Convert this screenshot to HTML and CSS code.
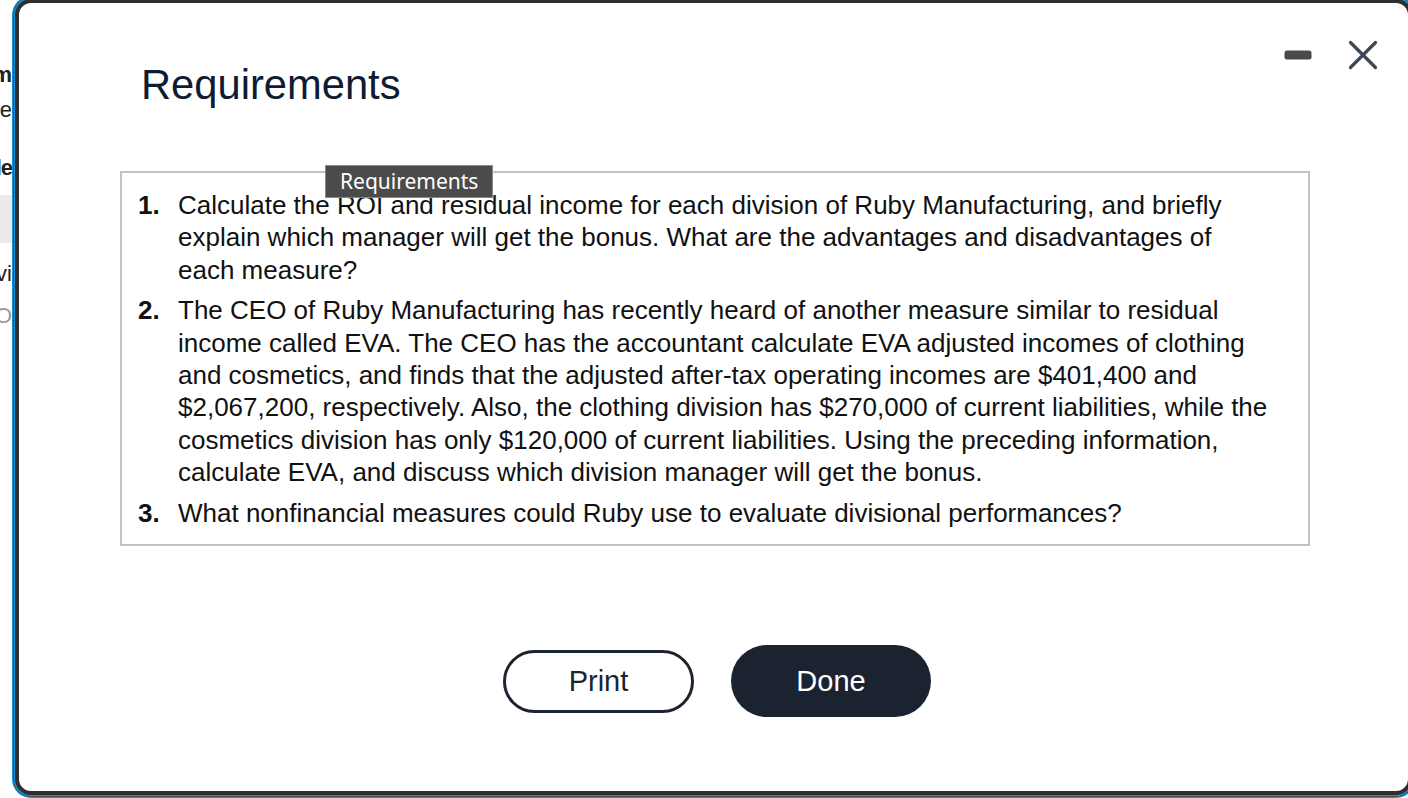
FILE: index.html
```html
<!DOCTYPE html>
<html lang="en">
<head>
<meta charset="utf-8">
<title>Requirements</title>
<link rel="stylesheet" href="styles.css">
</head>
<body>
<div class="page">
  <div class="bg-col">
    <div class="bg-line bold l1">nm</div>
    <div class="bg-line l2">ge</div>
    <div class="bg-line bold l3">ble</div>
    <div class="bg-band"></div>
    <div class="bg-line l4">ovi</div>
    <div class="bg-line light l5">O</div>
  </div>

  <div class="modal" role="dialog" aria-label="Requirements">
    <div class="modal-head">
      <h1 class="title">Requirements</h1>
      <div class="win-ctrls">
        <svg class="ico-min" width="28" height="10" viewBox="0 0 28 10" aria-hidden="true"><rect x="0.5" y="0.5" width="27" height="9" rx="2.5" fill="#4a4a4a"/></svg>
        <svg class="ico-close" width="30" height="30" viewBox="0 0 30 30" aria-hidden="true"><path d="M2.5 2.5 L27.5 27.5 M27.5 2.5 L2.5 27.5" stroke="#3c4753" stroke-width="3.2" stroke-linecap="round"/></svg>
      </div>
    </div>

    <div class="req-box">
      <ol class="req-list">
        <li><span class="num">1.</span><span class="txt">Calculate the ROI and residual income for each division of Ruby Manufacturing, and briefly explain which manager will get the bonus. What are the advantages and disadvantages of each measure?</span></li>
        <li><span class="num">2.</span><span class="txt">The CEO of Ruby Manufacturing has recently heard of another measure similar to residual income called EVA. The CEO has the accountant calculate EVA adjusted incomes of clothing and cosmetics, and finds that the adjusted after-tax operating incomes are $401,400 and $2,067,200, respectively. Also, the clothing division has $270,000 of current liabilities, while the cosmetics division has only $120,000 of current liabilities. Using the preceding information, calculate EVA, and discuss which division manager will get the bonus.</span></li>
        <li><span class="num">3.</span><span class="txt">What nonfinancial measures could Ruby use to evaluate divisional performances?</span></li>
      </ol>
      <div class="tooltip">Requirements</div>
    </div>

    <div class="actions">
      <button class="btn btn-print" type="button">Print</button>
      <button class="btn btn-done" type="button">Done</button>
    </div>
  </div>
</div>
</body>
</html>
```

FILE: styles.css
```css
html, body {
  margin: 0;
  padding: 0;
  background: #ffffff;
}

body {
  font-family: "Liberation Sans", Arial, Helvetica, sans-serif;
  color: #111111;
}

.page {
  position: relative;
  width: 1408px;
  height: 798px;
  overflow: hidden;
}

/* background page peeking on the left */
.bg-col {
  width: 12px;
  overflow: hidden;
  display: flex;
  flex-direction: column;
  align-items: flex-end;
  font-size: 22px;
  line-height: 26px;
  color: #222;
}

.bg-line {
  white-space: nowrap;
}

.bg-line.bold { font-weight: 700; }
.bg-line.light { color: #999; }

.l1 { margin-top: 62px; }
.l2 { margin-top: 9px; }
.l3 { margin-top: 32px; letter-spacing: -1px; }
.bg-band {
  width: 12px;
  height: 48px;
  margin-top: 14px;
  background: #ebebeb;
  align-self: stretch;
}
.l4 { margin-top: 18px; }
.l5 { margin-top: 16px; }

/* modal */
.modal {
  position: absolute;
  left: 15px;
  top: -1px;
  width: 1397px;
  height: 796px;
  box-sizing: border-box;
  background: #ffffff;
  border: 4px solid #2e2e2e;
  border-radius: 16px;
  box-shadow: 0 0 0 3px #1b8fd2;
  outline: 1px dotted #2e2e2e;
  outline-offset: 1px;
  display: flex;
  flex-direction: column;
}

.modal-head {
  display: flex;
  justify-content: space-between;
  align-items: flex-start;
  padding: 0 30px 0 122px;
}

.title {
  margin: 60px 0 0 0;
  font-family: "Liberation Sans", Arial, Helvetica, sans-serif;
  font-weight: 400;
  font-size: 41.7px;
  line-height: 44px;
  color: #0f1b33;
}

.win-ctrls {
  display: flex;
  align-items: center;
  gap: 36px;
  margin-top: 37px;
}

.ico-min, .ico-close { display: block; }

.req-box {
  position: relative;
  margin: 64px 0 0 101px;
  width: 1190px;
  box-sizing: border-box;
  border: 2px solid #c2c2c2;
  padding: 16px 38px 15px 16px;
}

.req-list {
  list-style: none;
  margin: 0;
  padding: 0;
  display: flex;
  flex-direction: column;
  gap: 8px;
}

.req-list li {
  display: flex;
  font-size: 26px;
  line-height: 32.4px;
  color: #111;
}

.num {
  flex: 0 0 40px;
  font-weight: 700;
}

.txt {
  flex: 1;
}

.tooltip {
  position: absolute;
  left: 203px;
  top: -8px;
  padding: 0 14px;
  height: 31px;
  line-height: 31px;
  background: #4b4b4b;
  border: 1px solid #8a8a8a;
  color: #ffffff;
  font-family: "Noto Sans", "Open Sans", sans-serif;
  font-size: 21px;
  white-space: nowrap;
}

.actions {
  display: flex;
  justify-content: center;
  align-items: center;
  gap: 37px;
  margin: 99px 0 0 7px;
}

.btn {
  font-family: "Liberation Sans", Arial, Helvetica, sans-serif;
  font-size: 29px;
  border-radius: 40px;
  box-sizing: border-box;
  cursor: pointer;
}

.btn-print {
  width: 191px;
  height: 63px;
  background: #ffffff;
  border: 3px solid #1c2430;
  color: #1c2430;
}

.btn-done {
  width: 200px;
  height: 72px;
  background: #1c2330;
  border: none;
  color: #ffffff;
}
```
